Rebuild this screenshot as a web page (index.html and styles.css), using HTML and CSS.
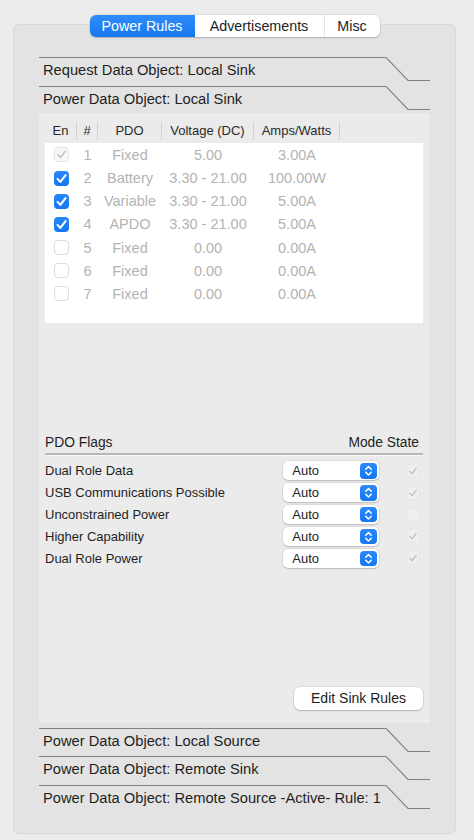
FILE: index.html
```html
<!DOCTYPE html>
<html>
<head>
<meta charset="utf-8">
<link rel="stylesheet" href="styles.css">
</head>
<body>
<div class="window">
  <div class="tabs">
    <div class="seg-group">
      <div class="seg seg-active">Power Rules</div>
      <div class="seg seg-adv">Advertisements</div>
      <div class="seg seg-misc">Misc</div>
    </div>
  </div>
  <div class="panel">
    <div class="disc">
      <div class="disc-label">Request Data Object: Local Sink</div>
      <svg class="disc-tail" viewBox="0 0 44 27"><polyline points="0,0.5 22,23.5 44,23.5"/></svg>
    </div>
    <div class="disc open">
      <div class="disc-label">Power Data Object: Local Sink</div>
      <svg class="disc-tail" viewBox="0 0 44 27"><polyline points="0,0.5 22,23.5 44,23.5"/></svg>
    </div>
    <div class="disc-body">
      <div class="tbl-head">
        <div class="th">En</div>
        <div class="th">#</div>
        <div class="th">PDO</div>
        <div class="th">Voltage (DC)</div>
        <div class="th">Amps/Watts</div>
      </div>
      <div class="tbl-body">
        <div class="tr">
          <span class="cb cb-dis"><svg viewBox="0 0 14 14"><polyline points="3.3,7.4 5.9,10.2 10.8,3.8"/></svg></span>
          <span>1</span><span>Fixed</span><span>5.00</span><span>3.00A</span>
        </div>
        <div class="tr">
          <span class="cb cb-on"><svg viewBox="0 0 14 14"><polyline points="3.3,7.4 5.9,10.2 10.8,3.8"/></svg></span>
          <span>2</span><span>Battery</span><span>3.30 - 21.00</span><span>100.00W</span>
        </div>
        <div class="tr">
          <span class="cb cb-on"><svg viewBox="0 0 14 14"><polyline points="3.3,7.4 5.9,10.2 10.8,3.8"/></svg></span>
          <span>3</span><span>Variable</span><span>3.30 - 21.00</span><span>5.00A</span>
        </div>
        <div class="tr">
          <span class="cb cb-on"><svg viewBox="0 0 14 14"><polyline points="3.3,7.4 5.9,10.2 10.8,3.8"/></svg></span>
          <span>4</span><span>APDO</span><span>3.30 - 21.00</span><span>5.00A</span>
        </div>
        <div class="tr">
          <span class="cb cb-off"></span>
          <span>5</span><span>Fixed</span><span>0.00</span><span>0.00A</span>
        </div>
        <div class="tr">
          <span class="cb cb-off"></span>
          <span>6</span><span>Fixed</span><span>0.00</span><span>0.00A</span>
        </div>
        <div class="tr">
          <span class="cb cb-off"></span>
          <span>7</span><span>Fixed</span><span>0.00</span><span>0.00A</span>
        </div>
      </div>

      <div class="flags">
        <div class="flags-head">
          <span>PDO Flags</span>
          <span>Mode State</span>
        </div>
        <div class="flag-rows">
          <div class="flag-row">
            <span class="flag-label">Dual Role Data</span>
            <div class="popup"><span class="popup-text">Auto</span><span class="stepper"><svg viewBox="0 0 16 16"><polyline points="5.2,6.4 8,3.6 10.8,6.4"/><polyline points="5.2,9.6 8,12.4 10.8,9.6"/></svg></span></div>
            <span class="scb"><svg viewBox="0 0 14 14"><polyline points="3.3,7.4 5.9,10.2 10.8,3.8"/></svg></span>
          </div>
          <div class="flag-row">
            <span class="flag-label">USB Communications Possible</span>
            <div class="popup"><span class="popup-text">Auto</span><span class="stepper"><svg viewBox="0 0 16 16"><polyline points="5.2,6.4 8,3.6 10.8,6.4"/><polyline points="5.2,9.6 8,12.4 10.8,9.6"/></svg></span></div>
            <span class="scb"><svg viewBox="0 0 14 14"><polyline points="3.3,7.4 5.9,10.2 10.8,3.8"/></svg></span>
          </div>
          <div class="flag-row">
            <span class="flag-label">Unconstrained Power</span>
            <div class="popup"><span class="popup-text">Auto</span><span class="stepper"><svg viewBox="0 0 16 16"><polyline points="5.2,6.4 8,3.6 10.8,6.4"/><polyline points="5.2,9.6 8,12.4 10.8,9.6"/></svg></span></div>
            <span class="scb"></span>
          </div>
          <div class="flag-row">
            <span class="flag-label">Higher Capability</span>
            <div class="popup"><span class="popup-text">Auto</span><span class="stepper"><svg viewBox="0 0 16 16"><polyline points="5.2,6.4 8,3.6 10.8,6.4"/><polyline points="5.2,9.6 8,12.4 10.8,9.6"/></svg></span></div>
            <span class="scb"><svg viewBox="0 0 14 14"><polyline points="3.3,7.4 5.9,10.2 10.8,3.8"/></svg></span>
          </div>
          <div class="flag-row">
            <span class="flag-label">Dual Role Power</span>
            <div class="popup"><span class="popup-text">Auto</span><span class="stepper"><svg viewBox="0 0 16 16"><polyline points="5.2,6.4 8,3.6 10.8,6.4"/><polyline points="5.2,9.6 8,12.4 10.8,9.6"/></svg></span></div>
            <span class="scb"><svg viewBox="0 0 14 14"><polyline points="3.3,7.4 5.9,10.2 10.8,3.8"/></svg></span>
          </div>
        </div>
      </div>

      <div class="btn">Edit Sink Rules</div>
    </div>
    <div class="disc">
      <div class="disc-label">Power Data Object: Local Source</div>
      <svg class="disc-tail" viewBox="0 0 44 27"><polyline points="0,0.5 22,23.5 44,23.5"/></svg>
    </div>
    <div class="disc">
      <div class="disc-label">Power Data Object: Remote Sink</div>
      <svg class="disc-tail" viewBox="0 0 44 27"><polyline points="0,0.5 22,23.5 44,23.5"/></svg>
    </div>
    <div class="disc">
      <div class="disc-label">Power Data Object: Remote Source -Active- Rule: 1</div>
      <svg class="disc-tail" viewBox="0 0 44 27"><polyline points="0,0.5 22,23.5 44,23.5"/></svg>
    </div>
  </div>
</div>
</body>
</html>
```

FILE: styles.css
```css
html, body {
  margin: 0;
  padding: 0;
}
body {
  background: #ececec;
  font-family: "Liberation Sans", Arial, sans-serif;
  color: #262626;
}
.window {
  box-sizing: border-box;
  height: 840px;
  padding: 15px 18px 0 13px;
}

/* Segmented tabs */
.tabs {
  display: flex;
  justify-content: center;
  position: relative;
  z-index: 1;
  margin-bottom: -13px;
}
.seg-group {
  display: flex;
  height: 22px;
  background: #fff;
  border-radius: 6px;
  box-shadow: 0 0 0 0.5px rgba(0, 0, 0, 0.12), 0 1px 1.5px rgba(0, 0, 0, 0.18);
}
.seg {
  font-size: 14.3px;
  line-height: 22px;
  text-align: center;
  color: #1e1e1e;
}
.seg-active {
  width: 105px;
  color: #fff;
  background: linear-gradient(#2f8cfa, #1677f1);
  border-radius: 6px 0 0 6px;
}
.seg-adv {
  width: 129px;
}
.seg-misc {
  width: 55px;
  border-left: 1px solid #e2e2e2;
}

/* Panel */
.panel {
  box-sizing: border-box;
  height: 810px;
  background: #e3e3e3;
  border: 1px solid #d9d9d9;
  border-radius: 6px;
  padding: 32.3px 25px 0 25px;
}

/* Disclosure headers */
.disc {
  display: flex;
  height: 26.7px;
  margin-bottom: 2px;
}
.disc.open {
  margin-bottom: 0;
}
.disc-label {
  flex: 1;
  border-top: 1px solid #808080;
  padding-left: 4px;
  font-size: 14.7px;
  line-height: 25px;
  white-space: nowrap;
  color: #1f1f1f;
}
.disc-tail {
  flex: none;
  width: 44px;
  height: 27px;
}
.disc-tail polyline {
  fill: none;
  stroke: #808080;
  stroke-width: 1.1;
}

/* Expanded body */
.disc-body {
  box-sizing: border-box;
  height: 610.6px;
  margin-bottom: 4.4px;
  background: #ebebeb;
  padding: 8.3px 7px 0 6px;
  display: flex;
  flex-direction: column;
}

/* Table */
.tbl-head {
  display: grid;
  grid-template-columns: 32px 21px 64px 92px 86px;
  height: 20px;
  align-items: center;
}
.th {
  font-size: 13px;
  line-height: 18px;
  height: 18px;
  text-align: center;
  border-right: 1px solid #d2d2d2;
  color: #2a2a2a;
}
.tbl-body {
  margin-top: 2.3px;
  height: 180px;
  background: #fff;
}
.tr {
  display: grid;
  grid-template-columns: 32px 21px 64px 92px 86px;
  height: 23.2px;
  align-items: center;
  justify-items: center;
  font-size: 14.5px;
  color: #b3b3b3;
  white-space: nowrap;
}
.cb {
  box-sizing: border-box;
  width: 15px;
  height: 15px;
  border-radius: 4px;
  display: flex;
}
.cb svg, .scb svg {
  width: 100%;
  height: 100%;
}
.cb polyline, .scb polyline {
  fill: none;
  stroke-width: 1.9;
  stroke-linecap: round;
  stroke-linejoin: round;
}
.cb-on {
  background: linear-gradient(#2a87f8, #1576f0);
}
.cb-on polyline {
  stroke: #fff;
}
.cb-dis {
  background: #f7f7f7;
  border: 1px solid #e4e4e4;
}
.cb-dis polyline {
  stroke: #c4c4c4;
}
.cb-off {
  background: #fff;
  border: 1px solid #dcdcdc;
}

/* Flags */
.flags {
  margin-top: 110.4px;
}
.flags-head {
  display: flex;
  justify-content: space-between;
  font-size: 13.8px;
  line-height: 18px;
  padding: 0 4px 1.6px 0;
  border-bottom: 2px solid #b8b8b8;
  box-shadow: 0 1px 0 #f7f7f7;
  color: #1f1f1f;
}
.flag-rows {
  margin-top: 4.8px;
}
.flag-row {
  display: flex;
  align-items: center;
  height: 21.83px;
  font-size: 13px;
  padding-right: 3px;
}
.flag-label {
  flex: 1;
  white-space: nowrap;
  color: #1f1f1f;
}
.popup {
  box-sizing: border-box;
  width: 96px;
  height: 19px;
  margin-right: 26.7px;
  background: #fff;
  border-radius: 5px;
  box-shadow: 0 0 0 0.5px rgba(0, 0, 0, 0.1), 0 1px 1.5px rgba(0, 0, 0, 0.16);
  display: flex;
  align-items: center;
  padding: 0 2.5px 0 9px;
}
.popup-text {
  flex: 1;
  font-size: 13px;
  color: #222;
}
.stepper {
  width: 17px;
  height: 15.5px;
  border-radius: 4px;
  background: linear-gradient(#2c89f9, #1576f0);
  display: flex;
}
.stepper svg {
  width: 100%;
  height: 100%;
}
.stepper polyline {
  fill: none;
  stroke: #fff;
  stroke-width: 1.6;
  stroke-linecap: round;
  stroke-linejoin: round;
}
.scb {
  box-sizing: border-box;
  width: 14px;
  height: 14px;
  border-radius: 3.5px;
  background: #efefef;
  border: 1px solid #e6e6e6;
  display: flex;
}
.scb polyline {
  stroke: #c2c2c2;
  stroke-width: 1.5;
}

/* Button */
.btn {
  margin-top: auto;
  margin-bottom: 13.3px;
  align-self: flex-end;
  width: 129px;
  height: 23px;
  line-height: 23px;
  text-align: center;
  font-size: 14px;
  background: #fff;
  border-radius: 6px;
  box-shadow: 0 0 0 0.5px rgba(0, 0, 0, 0.12), 0 1px 1.5px rgba(0, 0, 0, 0.18);
  color: #1e1e1e;
}
```
